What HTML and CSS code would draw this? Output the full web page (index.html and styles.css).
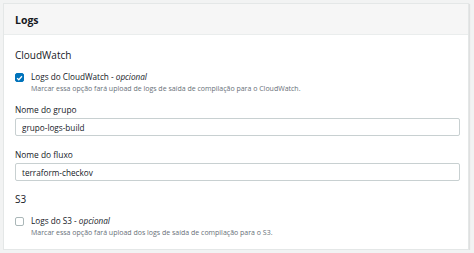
FILE: index.html
```html
<!DOCTYPE html>
<html lang="pt-BR">
<head>
    <meta charset="UTF-8">
    <title>Logs</title>
    <link rel="stylesheet" href="styles.css">
</head>
<body>
    <div class="panel">
        <div class="panel-header">Logs</div>
        <div class="panel-body">
            <div class="section-title">CloudWatch</div>

            <label class="check">
                <span class="box checked">
                    <svg viewBox="0 0 10 10" width="8" height="8"><path d="M1.5 5.2 L4 7.5 L8.5 2.5" fill="none" stroke="#fff" stroke-width="1.8"/></svg>
                </span>
                <span class="check-text">
                    <span class="check-label">Logs do CloudWatch - <i>opcional</i></span>
                    <span class="check-desc">Marcar essa opção fará upload de logs de saída de compilação para o CloudWatch.</span>
                </span>
            </label>

            <div class="field">
                <div class="field-label">Nome do grupo</div>
                <div class="input">grupo-logs-build</div>
            </div>

            <div class="field">
                <div class="field-label">Nome do fluxo</div>
                <div class="input">terraform-checkov</div>
            </div>

            <div class="section-title">S3</div>

            <label class="check">
                <span class="box"></span>
                <span class="check-text">
                    <span class="check-label">Logs do S3 - <i>opcional</i></span>
                    <span class="check-desc">Marcar essa opção fará upload dos logs de saída de compilação para o S3.</span>
                </span>
            </label>
        </div>
    </div>
</body>
</html>
```

FILE: styles.css
```css
* {
    margin: 0;
    padding: 0;
    box-sizing: border-box;
}

body {
    background: #f2f3f3;
    font-family: 'Open Sans', sans-serif;
    color: #16191f;
    padding: 3px 5px 0 3px;
}

.panel {
    width: 466px;
    height: 247px;
    background: #fff;
    border: 1px solid #e4e7e7;
    box-shadow: 1px 1px 1px rgba(0, 0, 0, 0.08);
}

.panel-header {
    height: 31px;
    padding: 1px 0 0 11px;
    display: flex;
    align-items: center;
    background: #f6f6f6;
    border-bottom: 1px solid #eaeded;
    font-size: 10.5px;
    font-weight: bold;
}

.panel-body {
    padding: 13px 10px 0 11px;
}

.section-title {
    font-size: 10px;
    height: 14px;
    line-height: 14px;
}

.check {
    display: flex;
    gap: 7px;
    margin-top: 12px;
}

.box {
    width: 9px;
    height: 9px;
    margin-top: 2px;
    border: 1px solid #aab7b8;
    border-radius: 2px;
    display: flex;
    align-items: center;
    justify-content: center;
    background: #fff;
}

.box.checked {
    background: #0073bb;
    border-color: #0073bb;
}

.check-text {
    display: flex;
    flex-direction: column;
}

.check-label {
    font-size: 8.2px;
    line-height: 12px;
}

.check-desc {
    margin-top: 1px;
    font-size: 7px;
    line-height: 10px;
    color: #687078;
}

.field {
    margin-top: 10px;
}

.field + .field {
    margin-top: 13px;
}

.field-label {
    font-size: 8.4px;
    line-height: 12px;
}

.input {
    margin-top: 2px;
    height: 18px;
    width: 445px;
    border: 1px solid #c8d0d1;
    border-radius: 2px;
    padding-left: 6px;
    display: flex;
    align-items: center;
    font-size: 8.2px;
}

.field + .section-title {
    margin-top: 11px;
}

.section-title + .check {
    margin-top: 9px;
}
```
